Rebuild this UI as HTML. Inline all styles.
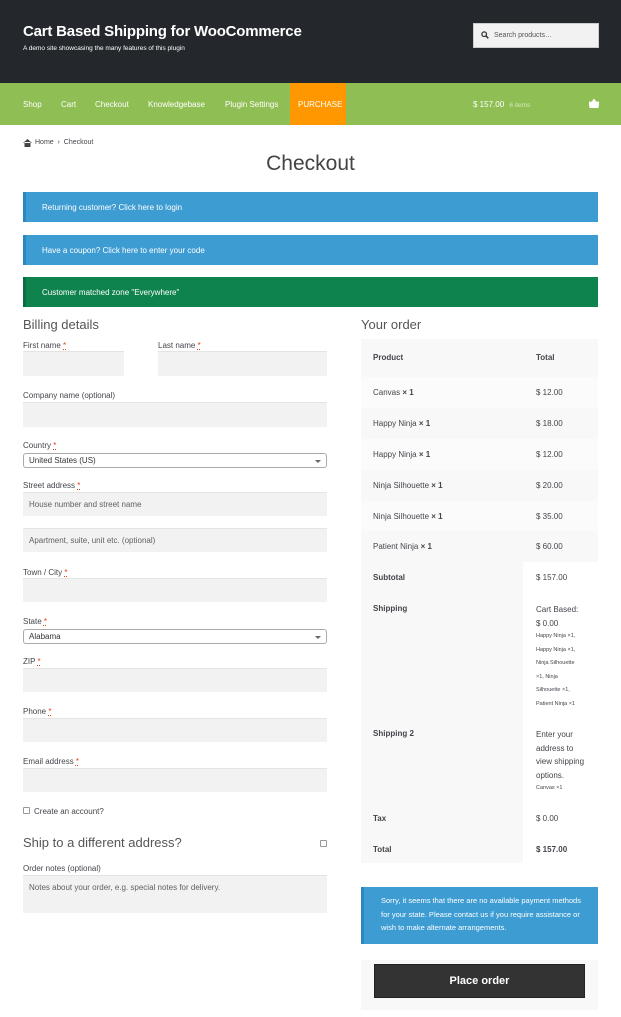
<!DOCTYPE html>
<html><head><meta charset="utf-8"><style>
*{margin:0;padding:0;box-sizing:border-box}
body{width:621px;height:1017px;position:relative;background:#fff;font-family:"Liberation Sans",sans-serif;color:#43454b;overflow:hidden}
.a{position:absolute}
.lbl{position:absolute;font-size:8px;color:#43454b}
.lbl i{color:#e2401c;font-style:normal;text-decoration:underline dotted}
.in{position:absolute;background:#f2f2f2;border-top:1px solid #e4e4e4;font-size:8px;color:#616161;padding-left:6px;display:flex;align-items:center}
.sel{position:absolute;background:#fff;border:1px solid #aaa;border-radius:3px;font-size:8px;color:#333;padding-left:5px;display:flex;align-items:center}
.sel:after{content:"";position:absolute;right:5px;top:6px;border:3px solid transparent;border-top:3px solid #666}
.t{position:absolute;font-size:8px;color:#43454b}
.b{font-weight:bold}
</style></head><body>
<div class="a" style="left:0;top:0;width:621px;height:83px;background:#24282d"></div>
<div class="a b" style="left:23px;top:23px;font-size:15px;color:#fff;letter-spacing:-0.2px">Cart Based Shipping for WooCommerce</div>
<div class="a" style="left:23px;top:45px;font-size:6.5px;color:#fff">A demo site showcasing the many features of this plugin</div>
<div class="a" style="left:473px;top:23px;width:126px;height:25px;background:#f2f2f2;border:1px solid #ccc;font-size:7px;color:#555;padding:8px 0 0 20px">Search products…</div>
<svg class="a" style="left:481px;top:31px" width="8" height="8" viewBox="0 0 8 8"><circle cx="3.2" cy="3.2" r="2.3" fill="none" stroke="#333" stroke-width="1.3"/><path d="M5 5L7.3 7.3" stroke="#333" stroke-width="1.5"/></svg>
<div class="a" style="left:0;top:83px;width:621px;height:42px;background:#8fbe54"></div>
<div class="a" style="left:290px;top:83px;width:56px;height:42px;background:#ff9800"></div>
<div class="a" style="left:23px;top:100px;font-size:8px;color:#fff;word-spacing:0">
<span style="position:absolute;left:0">Shop</span><span style="position:absolute;left:38px">Cart</span><span style="position:absolute;left:72px">Checkout</span><span style="position:absolute;left:125px;white-space:nowrap">Knowledgebase</span><span style="position:absolute;left:202px;white-space:nowrap">Plugin Settings</span><span style="position:absolute;left:275px">PURCHASE</span></div>
<div class="a" style="left:473px;top:100px;font-size:8px;color:#fff;white-space:nowrap">$ 157.00 <span style="font-size:6.5px;color:#d6ecbf;margin-left:3px">6 items</span></div>
<svg class="a" style="left:589px;top:99px" width="10" height="9" viewBox="0 0 10 9"><path d="M0 3H10L9 9H1Z M3 3L5 0L7 3" fill="#fff" stroke="#fff" stroke-width=".8"/></svg>
<svg class="a" style="left:23px;top:139px" width="9" height="8" viewBox="0 0 9 8"><path d="M0 4L4.5 0L9 4M1.5 3V8H7.5V3" fill="#43454b"/></svg>
<div class="a" style="left:35px;top:139px;font-size:7px;color:#43454b">Home &nbsp;›&nbsp; Checkout</div>
<div class="a" style="left:0;width:621px;top:152px;text-align:center;font-size:21px;color:#444">Checkout</div>
<div class="a" style="left:23px;top:192px;width:575px;height:30px;background:#3d9cd2;border-left:3px solid #2b88be;color:#fff;font-size:8px;padding:11px 0 0 16px">Returning customer? Click here to login</div>
<div class="a" style="left:23px;top:235px;width:575px;height:30px;background:#3d9cd2;border-left:3px solid #2b88be;color:#fff;font-size:8px;padding:11px 0 0 16px">Have a coupon? Click here to enter your code</div>
<div class="a" style="left:23px;top:277px;width:575px;height:30px;background:#0f834d;border-left:3px solid #0b6e40;color:#fff;font-size:8px;padding:11px 0 0 16px">Customer matched zone "Everywhere"</div>
<div class="a" style="left:23px;top:317px;font-size:13px;color:#555">Billing details</div>
<div class="a" style="left:361px;top:317px;font-size:13px;color:#555">Your order</div>
<div class="lbl" style="left:23px;top:341px">First name <i>*</i></div>
<div class="lbl" style="left:158px;top:341px">Last name <i>*</i></div>
<div class="in" style="left:23px;top:351px;width:101px;height:25px"></div>
<div class="in" style="left:158px;top:351px;width:169px;height:25px"></div>
<div class="lbl" style="left:23px;top:391px">Company name (optional)</div>
<div class="in" style="left:23px;top:402px;width:304px;height:25px"></div>
<div class="lbl" style="left:23px;top:441px">Country <i>*</i></div>
<div class="sel" style="left:23px;top:453px;width:304px;height:15px">United States (US)</div>
<div class="lbl" style="left:23px;top:481px">Street address <i>*</i></div>
<div class="in" style="left:23px;top:492px;width:304px;height:24px">House number and street name</div>
<div class="in" style="left:23px;top:528px;width:304px;height:24px">Apartment, suite, unit etc. (optional)</div>
<div class="lbl" style="left:23px;top:568px">Town / City <i>*</i></div>
<div class="in" style="left:23px;top:578px;width:304px;height:24px"></div>
<div class="lbl" style="left:23px;top:617px">State <i>*</i></div>
<div class="sel" style="left:23px;top:629px;width:304px;height:15px">Alabama</div>
<div class="lbl" style="left:23px;top:657px">ZIP <i>*</i></div>
<div class="in" style="left:23px;top:668px;width:304px;height:24px"></div>
<div class="lbl" style="left:23px;top:707px">Phone <i>*</i></div>
<div class="in" style="left:23px;top:718px;width:304px;height:24px"></div>
<div class="lbl" style="left:23px;top:757px">Email address <i>*</i></div>
<div class="in" style="left:23px;top:768px;width:304px;height:24px"></div>
<div class="a" style="left:23px;top:807px;width:7px;height:7px;border:1px solid #999;border-radius:1px"></div>
<div class="lbl" style="left:34px;top:807px">Create an account?</div>
<div class="a" style="left:23px;top:835px;font-size:13px;color:#555">Ship to a different address?</div>
<div class="a" style="left:320px;top:840px;width:7px;height:7px;border:1px solid #999;border-radius:1px"></div>
<div class="lbl" style="left:23px;top:864px">Order notes (optional)</div>
<div class="in" style="left:23px;top:875px;width:304px;height:38px;align-items:flex-start;padding-top:7px">Notes about your order, e.g. special notes for delivery.</div>
<div class="a" style="left:361px;top:339px;width:237px;height:524px;background:#f8f8f8"></div>
<div class="a" style="left:361px;top:377px;width:237px;height:31px;background:#fbfbfb"></div>
<div class="a" style="left:361px;top:439px;width:237px;height:31px;background:#fbfbfb"></div>
<div class="a" style="left:361px;top:501px;width:237px;height:30px;background:#fbfbfb"></div>
<div class="a" style="left:523px;top:562px;width:75px;height:301px;background:#fff"></div>
<div class="t b" style="left:373px;top:353px">Product</div><div class="t b" style="left:536px;top:353px">Total</div>
<div class="t" style="left:373px;top:388px">Canvas <b>× 1</b></div><div class="t" style="left:536px;top:388px">$ 12.00</div>
<div class="t" style="left:373px;top:419px">Happy Ninja <b>× 1</b></div><div class="t" style="left:536px;top:419px">$ 18.00</div>
<div class="t" style="left:373px;top:450px">Happy Ninja <b>× 1</b></div><div class="t" style="left:536px;top:450px">$ 12.00</div>
<div class="t" style="left:373px;top:481px">Ninja Silhouette <b>× 1</b></div><div class="t" style="left:536px;top:481px">$ 20.00</div>
<div class="t" style="left:373px;top:512px">Ninja Silhouette <b>× 1</b></div><div class="t" style="left:536px;top:512px">$ 35.00</div>
<div class="t" style="left:373px;top:542px">Patient Ninja <b>× 1</b></div><div class="t" style="left:536px;top:542px">$ 60.00</div>
<div class="t b" style="left:373px;top:573px">Subtotal</div><div class="t" style="left:536px;top:573px">$ 157.00</div>
<div class="t b" style="left:373px;top:604px">Shipping</div>
<div class="t" style="left:536px;top:603px;width:55px;line-height:13.5px">Cart Based:<br>$ 0.00<div style="font-size:5.5px;line-height:13.5px">Happy Ninja ×1,<br>Happy Ninja ×1,<br>Ninja Silhouette<br>×1, Ninja<br>Silhouette ×1,<br>Patient Ninja ×1</div></div>
<div class="t b" style="left:373px;top:729px">Shipping 2</div>
<div class="t" style="left:536px;top:728px;width:56px;line-height:13.5px">Enter your<br>address to<br>view shipping<br>options.<div style="font-size:5.5px">Canvas ×1</div></div>
<div class="t b" style="left:373px;top:814px">Tax</div><div class="t" style="left:536px;top:814px">$ 0.00</div>
<div class="t b" style="left:373px;top:845px">Total</div><div class="t b" style="left:536px;top:845px">$ 157.00</div>
<div class="a" style="left:361px;top:887px;width:237px;height:57px;background:#3d9cd2;border-left:3px solid #2b88be;color:#fff;font-size:7.5px;line-height:13.5px;padding:7px 8px 0 17px">Sorry, it seems that there are no available payment methods for your state. Please contact us if you require assistance or wish to make alternate arrangements.</div>
<div class="a" style="left:361px;top:960px;width:237px;height:50px;background:#f8f8f8"></div>
<div class="a b" style="left:374px;top:964px;width:211px;height:34px;background:#333;border:1px solid #222;color:#fff;font-size:11px;text-align:center;line-height:33px">Place order</div>
</body></html>
